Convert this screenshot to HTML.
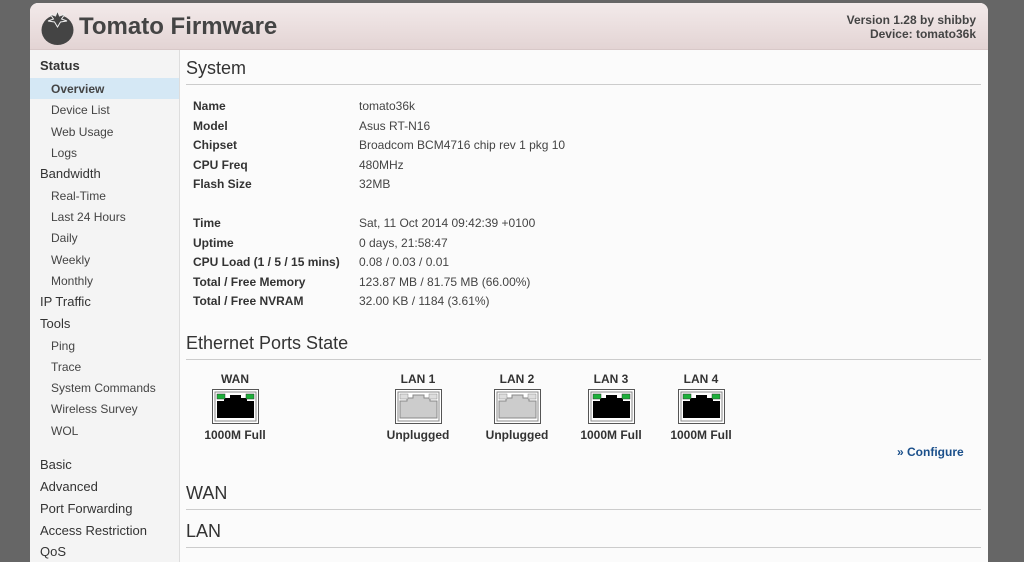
<!DOCTYPE html>
<html><head><meta charset="utf-8"><style>
*{margin:0;padding:0;box-sizing:border-box}
html,body{width:1024px;height:562px;overflow:hidden}
body{background:#666;font-family:"Liberation Sans",Arial,sans-serif;position:relative;color:#333}
#c{position:absolute;left:30px;top:3px;width:958px;height:559px;background:#fbfbfb;border-radius:8px 8px 0 0;overflow:hidden}
#hd{position:absolute;left:0;top:0;width:958px;height:47px;background:linear-gradient(#f3eaea,#e3d4d4);border-bottom:1px solid #d8c8c8}
#sb{position:absolute;left:0;top:47px;width:150px;height:512px;background:#f4f4f4;border-right:1px solid #ddd}
.t{position:absolute;white-space:nowrap;line-height:16px;margin-top:1px}
.a{font-size:13px;color:#333;left:10px}
.s{font-size:12px;color:#444;left:21px}
.h{font-size:18px;color:#333;left:156px;line-height:22px}
.ln{position:absolute;left:156px;width:795px;height:1px;background:#ccc}
.l{font-size:12px;font-weight:bold;color:#333;left:163px}
.v{font-size:12px;color:#444;left:329px}
.p{position:absolute;width:80px;text-align:center;font-size:12px;font-weight:bold;color:#333;margin-top:1px}
</style></head><body>
<div id="c">
<div id="hd">
<svg style="position:absolute;left:11px;top:6px" width="33" height="36" viewBox="0 0 33 36"><ellipse cx="16.5" cy="21" rx="16" ry="15" fill="#444"/><path d="M16.5 2 L18.5 7 L24 5 L20.5 10 L26 12 L19.5 13 L16.5 18 L13.5 13 L7 12 L12.5 10 L9 5 L14.5 7 Z" fill="#444" stroke="#eee" stroke-width="1"/></svg>
<div class="t" style="left:49px;top:9px;font-size:24px;line-height:28px;font-weight:bold;color:#444">Tomato Firmware</div>
<div class="t" style="right:12px;top:9px;font-size:12px;font-weight:bold;color:#444;text-align:right;line-height:14px">Version 1.28 by shibby<br>Device: tomato36k</div>
</div>
<div id="sb">
<div style="position:absolute;left:0;top:28px;width:149px;height:21px;background:#d5e8f5"></div>
</div>
<div class="t a" style="top:54px;font-weight:bold">Status</div>
<div class="t s" style="top:77px;font-weight:bold">Overview</div>
<div class="t s" style="top:98px">Device List</div>
<div class="t s" style="top:120px">Web Usage</div>
<div class="t s" style="top:141px">Logs</div>
<div class="t a" style="top:162px">Bandwidth</div>
<div class="t s" style="top:184px">Real-Time</div>
<div class="t s" style="top:205px">Last 24 Hours</div>
<div class="t s" style="top:226px">Daily</div>
<div class="t s" style="top:248px">Weekly</div>
<div class="t s" style="top:269px">Monthly</div>
<div class="t a" style="top:290px">IP Traffic</div>
<div class="t a" style="top:312px">Tools</div>
<div class="t s" style="top:334px">Ping</div>
<div class="t s" style="top:355px">Trace</div>
<div class="t s" style="top:376px">System Commands</div>
<div class="t s" style="top:397px">Wireless Survey</div>
<div class="t s" style="top:419px">WOL</div>
<div class="t a" style="top:453px">Basic</div>
<div class="t a" style="top:475px">Advanced</div>
<div class="t a" style="top:497px">Port Forwarding</div>
<div class="t a" style="top:519px">Access Restriction</div>
<div class="t a" style="top:540px">QoS</div>

<div class="t h" style="top:53px">System</div><div class="ln" style="top:81px"></div>
<div class="t l" style="top:94px">Name</div><div class="t v" style="top:94px">tomato36k</div>
<div class="t l" style="top:114px">Model</div><div class="t v" style="top:114px">Asus RT-N16</div>
<div class="t l" style="top:133px">Chipset</div><div class="t v" style="top:133px">Broadcom BCM4716 chip rev 1 pkg 10</div>
<div class="t l" style="top:153px">CPU Freq</div><div class="t v" style="top:153px">480MHz</div>
<div class="t l" style="top:172px">Flash Size</div><div class="t v" style="top:172px">32MB</div>
<div class="t l" style="top:211px">Time</div><div class="t v" style="top:211px">Sat, 11 Oct 2014 09:42:39 +0100</div>
<div class="t l" style="top:231px">Uptime</div><div class="t v" style="top:231px">0 days, 21:58:47</div>
<div class="t l" style="top:250px">CPU Load (1 / 5 / 15 mins)</div><div class="t v" style="top:250px">0.08 / 0.03 / 0.01</div>
<div class="t l" style="top:270px">Total / Free Memory</div><div class="t v" style="top:270px">123.87 MB / 81.75 MB (66.00%)</div>
<div class="t l" style="top:289px">Total / Free NVRAM</div><div class="t v" style="top:289px">32.00 KB / 1184 (3.61%)</div>

<div class="t h" style="top:328px">Ethernet Ports State</div><div class="ln" style="top:356px"></div>

<svg width="0" height="0" style="position:absolute"><defs>
<g id="on"><rect x="0.5" y="0.5" width="46" height="34" fill="#fff" stroke="#555"/><rect x="3" y="3" width="41" height="29" fill="#fff" stroke="#888"/><path d="M5 29 V12 H12 V9 H18 V6 H29 V9 H35 V12 H42 V29 Z" fill="#000"/><rect x="5" y="5" width="8" height="5" fill="#1db03a" stroke="#333" stroke-width=".5"/><rect x="34" y="5" width="8" height="5" fill="#1db03a" stroke="#333" stroke-width=".5"/></g>
<g id="off"><rect x="0.5" y="0.5" width="46" height="34" fill="#fff" stroke="#555"/><rect x="3" y="3" width="41" height="29" fill="#fff" stroke="#888"/><path d="M5 29 V12 H12 V9 H18 V6 H29 V9 H35 V12 H42 V29 Z" fill="#ccc" stroke="#888"/><rect x="5" y="5" width="8" height="5" fill="#ddd" stroke="#888" stroke-width=".5"/><rect x="34" y="5" width="8" height="5" fill="#ddd" stroke="#888" stroke-width=".5"/></g>
</defs></svg>

<div class="p" style="left:165px;top:368px">WAN</div><svg style="position:absolute;left:182px;top:386px" width="47" height="35"><use href="#on"/></svg><div class="p" style="left:165px;top:424px">1000M Full</div>
<div class="p" style="left:348px;top:368px">LAN 1</div><svg style="position:absolute;left:365px;top:386px" width="47" height="35"><use href="#off"/></svg><div class="p" style="left:348px;top:424px">Unplugged</div>
<div class="p" style="left:447px;top:368px">LAN 2</div><svg style="position:absolute;left:464px;top:386px" width="47" height="35"><use href="#off"/></svg><div class="p" style="left:447px;top:424px">Unplugged</div>
<div class="p" style="left:541px;top:368px">LAN 3</div><svg style="position:absolute;left:558px;top:386px" width="47" height="35"><use href="#on"/></svg><div class="p" style="left:541px;top:424px">1000M Full</div>
<div class="p" style="left:631px;top:368px">LAN 4</div><svg style="position:absolute;left:648px;top:386px" width="47" height="35"><use href="#on"/></svg><div class="p" style="left:631px;top:424px">1000M Full</div>
<div class="t" style="left:867px;top:440px;font-size:12px;font-weight:bold;color:#1a4f8a">» Configure</div>

<div class="t h" style="top:478px">WAN</div><div class="ln" style="top:506px"></div>
<div class="t h" style="top:516px">LAN</div><div class="ln" style="top:544px"></div>
</div>
</body></html>
